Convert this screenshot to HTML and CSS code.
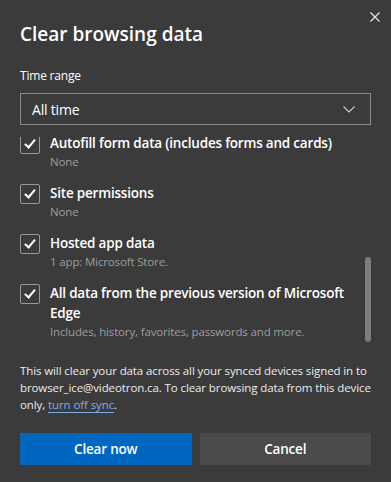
FILE: index.html
```html
<!DOCTYPE html>
<html lang="en">

<head>
  <meta charset="UTF-8" />
  <meta name="viewport" content="width=device-width, initial-scale=1.0" />
  <title>Clear browsing data</title>
  <link rel="stylesheet" href="styles.css">
</head>

<body>
  <div class="dialogo">
    <button class="cerrar" aria-label="Close">
      <svg width="10" height="10" viewBox="0 0 10 10">
        <path d="M0.5 0.5 L9.5 9.5 M9.5 0.5 L0.5 9.5" stroke="#e6e6e6" stroke-width="1.2" fill="none" />
      </svg>
    </button>

    <h1 class="titulo">Clear browsing data</h1>

    <label class="etiqueta" for="rango">Time range</label>
    <div class="selector" id="rango">
      <span>All time</span>
      <svg width="12" height="7" viewBox="0 0 12 7">
        <path d="M0.5 0.5 L6 6 L11.5 0.5" stroke="#cfcfcf" stroke-width="1.1" fill="none" />
      </svg>
    </div>

    <div class="lista">
      <div class="lista-interior">
        <div class="opcion">
          <span class="casilla"></span>
          <div>
            <div class="opcion-titulo">Browsing history</div>
            <div class="opcion-detalle">None</div>
          </div>
        </div>
        <div class="opcion">
          <span class="casilla"></span>
          <div>
            <div class="opcion-titulo">Download history</div>
            <div class="opcion-detalle">None</div>
          </div>
        </div>
        <div class="opcion">
          <span class="casilla"></span>
          <div>
            <div class="opcion-titulo">Cookies and other site data</div>
            <div class="opcion-detalle">From 3 sites.</div>
          </div>
        </div>
        <div class="opcion">
          <span class="casilla"></span>
          <div>
            <div class="opcion-titulo">Cached images and files</div>
            <div class="opcion-detalle">Less than 1 MB</div>
          </div>
        </div>
        <div class="opcion">
          <span class="casilla"></span>
          <div>
            <div class="opcion-titulo">Passwords</div>
            <div class="opcion-detalle">None</div>
          </div>
        </div>
        <div class="opcion">
          <span class="casilla marcada"></span>
          <div>
            <div class="opcion-titulo">Autofill form data (includes forms and cards)</div>
            <div class="opcion-detalle">None</div>
          </div>
        </div>
        <div class="opcion">
          <span class="casilla marcada"></span>
          <div>
            <div class="opcion-titulo">Site permissions</div>
            <div class="opcion-detalle">None</div>
          </div>
        </div>
        <div class="opcion">
          <span class="casilla marcada"></span>
          <div>
            <div class="opcion-titulo">Hosted app data</div>
            <div class="opcion-detalle">1 app: Microsoft Store.</div>
          </div>
        </div>
        <div class="opcion">
          <span class="casilla marcada"></span>
          <div>
            <div class="opcion-titulo">All data from the previous version of Microsoft Edge</div>
            <div class="opcion-detalle">Includes, history, favorites, passwords and more.</div>
          </div>
        </div>
      </div>
      <div class="barra"></div>
    </div>

    <p class="aviso">
      This will clear your data across all your synced devices signed in to
      browser_ice@videotron.ca. To clear browsing data from this device
      only, <a href="#">turn off sync</a>.
    </p>

    <div class="botones">
      <button class="boton boton-principal">Clear now</button>
      <button class="boton">Cancel</button>
    </div>
  </div>
</body>

</html>
```

FILE: styles.css
```css
body {
  margin: 0;
  background-color: #3b3b3b;
  color: #ffffff;
  font-family: "Open Sans", "Noto Sans", sans-serif;
}

.dialogo {
  position: relative;
  padding: 20px 20px 0 20px;
}

.cerrar {
  position: absolute;
  top: 12px;
  right: 11px;
  width: 10px;
  height: 10px;
  padding: 0;
  border: none;
  background: none;
  display: flex;
}

.titulo {
  margin: 0;
  font-size: 19px;
  line-height: 28px;
  font-weight: 600;
}

.etiqueta {
  display: block;
  margin-top: 19px;
  font-size: 12px;
  line-height: 18px;
  letter-spacing: -0.2px;
}

.selector {
  margin-top: 8px;
  height: 30px;
  border: 1px solid #8a8a8a;
  display: flex;
  align-items: center;
  justify-content: space-between;
  padding: 0 15px 0 11px;
  font-size: 14px;
  letter-spacing: -0.2px;
}

.lista {
  position: relative;
  margin-top: 12px;
  height: 209px;
  overflow: hidden;
}

.lista-interior {
  margin-top: -254px;
  padding-right: 16px;
}

.opcion {
  display: flex;
  gap: 10px;
  margin-bottom: 12px;
}

.casilla {
  flex: none;
  width: 18px;
  height: 18px;
  margin-top: 1px;
  border: 1px solid #9a9a9a;
  border-radius: 2px;
  position: relative;
}

.marcada::after {
  content: "";
  position: absolute;
  left: 6px;
  top: 2px;
  width: 4px;
  height: 9px;
  border-right: 2px solid #ffffff;
  border-bottom: 2px solid #ffffff;
  transform: rotate(40deg);
}

.opcion-titulo {
  font-size: 13.5px;
  line-height: 20px;
  font-weight: 600;
  letter-spacing: -0.2px;
}

.opcion-detalle {
  font-size: 11.5px;
  line-height: 18px;
  letter-spacing: -0.15px;
  color: #9d9d9d;
}

.barra {
  position: absolute;
  right: 0;
  top: 120px;
  width: 6px;
  height: 85px;
  border-radius: 3px;
  background-color: #7d7d7d;
}

.aviso {
  margin: 16px 0 0 0;
  font-size: 11.5px;
  line-height: 17px;
  letter-spacing: -0.1px;
  color: #ececec;
}

.aviso a {
  color: #7aaee0;
  text-decoration: underline;
  text-underline-offset: 3px;
}

.botones {
  display: grid;
  grid-template-columns: 1fr 1fr;
  gap: 8px;
  margin-top: 20px;
}

.boton {
  height: 32px;
  border: none;
  background-color: #4a4a4a;
  color: #ffffff;
  font-family: inherit;
  font-size: 13.5px;
  font-weight: 600;
  letter-spacing: -0.2px;
}

.boton-principal {
  background-color: #0067c0;
}
```
